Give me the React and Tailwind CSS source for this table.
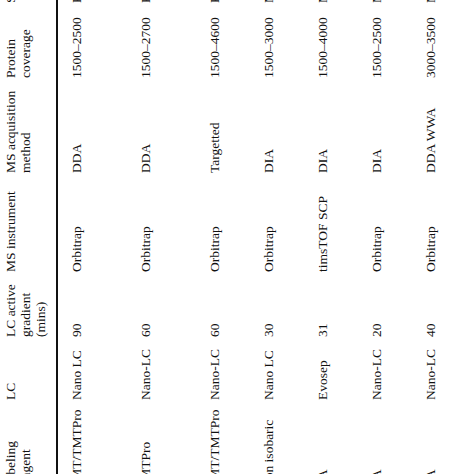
const cols = 'grid grid-cols-[89px_63px_65px_99px_95px_75px_160px]'

const rows = [
  { h: 'h-[69px]', c: ['TMT/TMTPro', 'Nano LC', '90', 'Orbitrap', 'DDA', '1500–2500', 'Proteome Discoverer'] },
  { h: 'h-[69px]', c: ['TMTPro', 'Nano-LC', '60', 'Orbitrap', 'DDA', '1500–2700', 'Proteome Discoverer'] },
  { h: 'h-[54px]', c: ['TMT/TMTPro', 'Nano-LC', '60', 'Orbitrap', 'Targetted', '1500–4600', 'Proteome Discoverer'] },
  { h: 'h-[54px]', c: ['Non isobaric', 'Nano LC', '30', 'Orbitrap', 'DIA', '1500–3000', 'MaxQuant'] },
  { h: 'h-[54px]', c: ['NA', 'Evosep', '31', 'timsTOF SCP', 'DIA', '1500–4000', 'MaxQuant'] },
  { h: 'h-[54px]', c: ['NA', 'Nano-LC', '20', 'Orbitrap', 'DIA', '1500–2500', 'MaxQuant'] },
  { h: 'h-[54px]', c: ['NA', 'Nano-LC', '40', 'Orbitrap', 'DDA WWA', '3000–3500', 'MaxQuant'] },
]

const App = () => {
  return (
    <div className="relative h-[474px] w-[474px] overflow-hidden bg-white">
      {/* the table is printed sideways, so the whole sheet is turned */}
      <div className="h-[474px] w-[474px] -rotate-90">
        <div className="-ml-[15px] w-[650px] font-['Liberation_Serif',serif] text-[13.5px] leading-[15px] text-[#111]">
          <div className={`${cols} h-[56px] pt-[3px]`}>
            <div>Labeling<br />reagent</div>
            <div>LC</div>
            <div>LC active<br />gradient<br />(mins)</div>
            <div>MS instrument</div>
            <div>MS acquisition<br />method</div>
            <div>Protein<br />coverage</div>
            <div>Software</div>
          </div>
          <div className="h-[1.5px] bg-[#111]" />
          {rows.map((r, i) => (
            <div key={i} className={`${cols} ${r.h} pt-[11px]`}>
              {r.c.map((t, j) => (
                <div key={j} className="whitespace-nowrap">{t}</div>
              ))}
            </div>
          ))}
        </div>
      </div>
    </div>
  )
}

export default App
